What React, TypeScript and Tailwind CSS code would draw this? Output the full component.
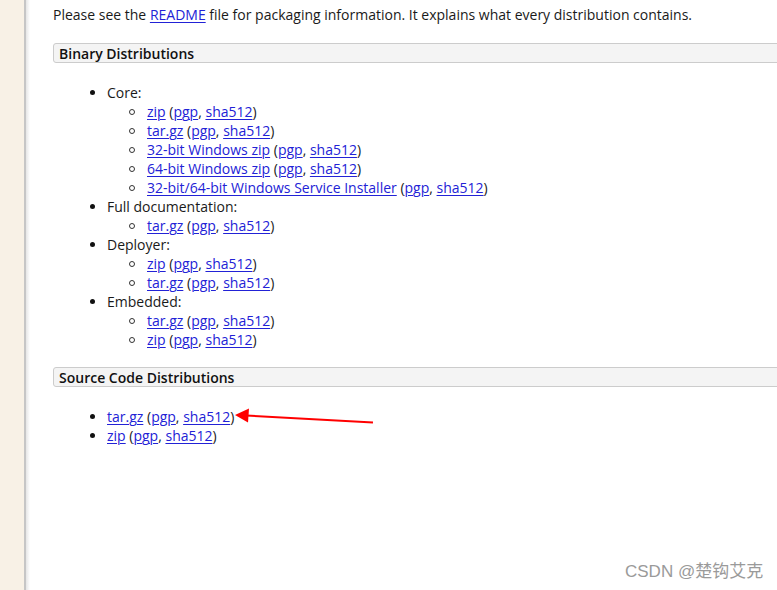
import React from "react";

const LINK = "text-[#2222d6] underline underline-offset-[2px] decoration-[1px]";

function L({ children }: { children: React.ReactNode }) {
  return <a href="#" className={LINK}>{children}</a>;
}

function Sig() {
  return (
    <>
      {" "}(<L>pgp</L>, <L>sha512</L>)
    </>
  );
}

function Disc() {
  return (
    <span className="w-[18px] shrink-0 flex items-center">
      <span className="ml-[1px] w-[5px] h-[5px] rounded-full bg-[#111]" />
    </span>
  );
}

function Ring() {
  return (
    <span className="w-[18px] shrink-0 flex items-center">
      <span className="w-[6px] h-[6px] rounded-full border border-[#333]" />
    </span>
  );
}

function Top({ label, children }: { label: React.ReactNode; children?: React.ReactNode }) {
  return (
    <li>
      <div className="flex items-center h-[19px] whitespace-nowrap">
        <Disc />
        <span>{label}</span>
      </div>
      {children ? <ul className="ml-[40px]">{children}</ul> : null}
    </li>
  );
}

function Sub({ name }: { name: string }) {
  return (
    <li className="flex items-center h-[19px] whitespace-nowrap">
      <Ring />
      <span>
        <L>{name}</L>
        <Sig />
      </span>
    </li>
  );
}

function Header({ title }: { title: string }) {
  return (
    <div className="h-[20px] w-[760px] rounded-[3px] border border-[#cccccc] bg-[#f4f4f4] pl-[5px] flex items-center font-semibold text-[#111]">
      {title}
    </div>
  );
}

export default function App() {
  return (
    <div
      className="relative flex h-[590px] w-[777px] overflow-hidden bg-white text-[14px] text-[#1a1a1a]"
      style={{ fontFamily: '"Open Sans", "Noto Sans", sans-serif' }}
    >
      <div className="w-[24px] shrink-0 bg-[#f8f1e6]" />
      <div className="w-[2px] shrink-0 bg-[#c6c6c6]" />
      <div className="w-[4px] shrink-0 bg-gradient-to-r from-[#e6e6e6] to-white" />
      <div className="pl-[23px] pt-[5px] shrink-0 leading-[19px]">
        <p className="h-[19px] whitespace-nowrap">
          Please see the <L>README</L> file for packaging information. It explains what every distribution contains.
        </p>
        <div className="mt-[19px]">
          <Header title="Binary Distributions" />
        </div>
        <ul className="ml-[36px] mt-[20px]">
          <Top label="Core:">
            <Sub name="zip" />
            <Sub name="tar.gz" />
            <Sub name="32-bit Windows zip" />
            <Sub name="64-bit Windows zip" />
            <Sub name="32-bit/64-bit Windows Service Installer" />
          </Top>
          <Top label="Full documentation:">
            <Sub name="tar.gz" />
          </Top>
          <Top label="Deployer:">
            <Sub name="zip" />
            <Sub name="tar.gz" />
          </Top>
          <Top label="Embedded:">
            <Sub name="tar.gz" />
            <Sub name="zip" />
          </Top>
        </ul>
        <div className="mt-[18px]">
          <Header title="Source Code Distributions" />
        </div>
        <ul className="ml-[36px] mt-[20px]">
          <Top label={<><L>tar.gz</L><Sig /></>} />
          <Top label={<><L>zip</L><Sig /></>} />
        </ul>
      </div>

      <svg className="absolute left-0 top-0 pointer-events-none" width="777" height="590">
        <line x1="373" y1="422.5" x2="246" y2="415.5" stroke="#f00" strokeWidth="2" />
        <polygon points="235,415 249,408.5 248,422.5" fill="#f00" />
      </svg>

      <div
        className="absolute left-[625px] top-[561px] text-[17px] leading-[22px] text-[#9a9a9a] whitespace-nowrap"
        style={{ fontFamily: '"Liberation Sans", "Noto Sans CJK SC", sans-serif' }}
      >
        CSDN @楚钩艾克
      </div>
    </div>
  );
}
